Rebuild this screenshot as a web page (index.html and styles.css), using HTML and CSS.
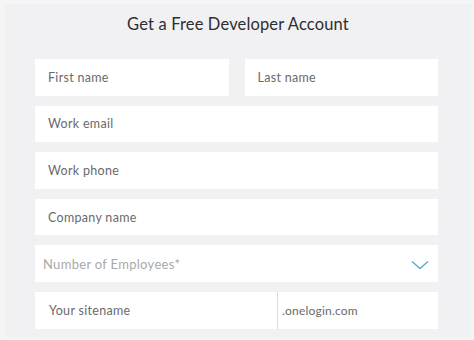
FILE: index.html
```html
<!DOCTYPE html>
<html>
<head>
<meta charset="utf-8">
<link rel="stylesheet" href="styles.css">
</head>
<body>
<div class="panel">
  <h1 class="title">Get a Free Developer Account</h1>
  <form class="form">
    <div class="row two">
      <div class="field"><span class="ph">First name</span></div>
      <div class="field"><span class="ph">Last name</span></div>
    </div>
    <div class="row"><div class="field"><span class="ph">Work email</span></div></div>
    <div class="row"><div class="field"><span class="ph">Work phone</span></div></div>
    <div class="row"><div class="field"><span class="ph">Company name</span></div></div>
    <div class="row">
      <div class="field select">
        <span class="ph light">Number of Employees*</span>
        <svg class="chev" width="18" height="10" viewBox="0 0 18 10"><path d="M1 1.5 L9 8.5 L17 1.5" fill="none" stroke="#5aaec6" stroke-width="1.4"/></svg>
      </div>
    </div>
    <div class="row">
      <div class="field site">
        <span class="ph">Your sitename</span>
        <span class="suffix">.onelogin.com</span>
      </div>
    </div>
  </form>
</div>
</body>
</html>
```
FILE: styles.css
```css
html, body {
  margin: 0;
  padding: 0;
}
body {
  width: 474px;
  height: 340px;
  background: #f5f5f6;
  font-family: Lato, "Open Sans", sans-serif;
  overflow: hidden;
}
.panel {
  margin: 4px 3px 0 5px;
  height: 333px;
  background: #f1f1f3;
  box-sizing: border-box;
  padding-top: 10px;
}
.title {
  margin: 0;
  text-align: center;
  font-weight: 400;
  font-size: 16.5px;
  line-height: 20px;
  color: #2e2e30;
  letter-spacing: 0.15px;
}
.form {
  margin: 25px 33px 0 30px;
}
.row {
  display: flex;
  gap: 16px;
  margin-bottom: 10px;
}
.field {
  flex: 1;
  height: 36.6px;
  background: #fff;
  display: flex;
  align-items: center;
  padding-left: 13px;
  box-sizing: border-box;
  position: relative;
}
.ph {
  font-size: 12.5px;
  color: #6a6a6c;
  letter-spacing: 0.3px;
}
.ph.light {
  color: #a9a9ab;
  font-size: 13px;
}
.select {
  padding-left: 8px;
  justify-content: space-between;
  padding-right: 9px;
}
.chev {
  display: block;
  margin-top: 2px;
}
.site {
  padding-left: 14px;
}
.site .ph {
  width: 228px;
  flex: none;
}
.suffix {
  border-left: 1px solid #dcdcde;
  height: 100%;
  display: flex;
  align-items: center;
  padding-left: 4px;
  font-size: 12px;
  color: #6a6a6c;
  letter-spacing: 0.2px;
}
```
